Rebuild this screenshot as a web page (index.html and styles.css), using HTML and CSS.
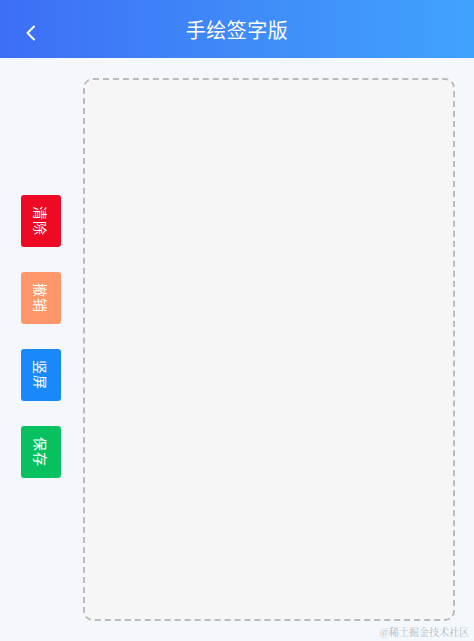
FILE: index.html
```html
<!doctype html>
<html>
	<head>
		<meta charset="utf-8">
		<link rel="stylesheet" href="styles.css">
	</head>
	<body>
		<div class="nav-bar">
			<span class="nav-back">
				<svg width="12" height="16" viewBox="0 0 12 16">
					<path d="M9 1.5 L2.5 8 L9 14.5" fill="none" stroke="#fff" stroke-width="2" stroke-linecap="round" stroke-linejoin="round"/>
				</svg>
			</span>
			<h1 class="nav-title">手绘签字版</h1>
		</div>

		<div class="sign-page">
			<div class="sign-actions">
				<button class="sign-btn sign-btn--danger"><span>清除</span></button>
				<button class="sign-btn sign-btn--warning"><span>撤销</span></button>
				<button class="sign-btn sign-btn--primary"><span>竖屏</span></button>
				<button class="sign-btn sign-btn--success"><span>保存</span></button>
			</div>
			<div class="sign-board"></div>
		</div>

		<div class="watermark">@稀土掘金技术社区</div>
	</body>
</html>
```

FILE: styles.css
```css
html, body {
	margin: 0;
	padding: 0;
	height: 100%;
}

body {
	display: flex;
	flex-direction: column;
	background: #f4f8fc;
	font-family: "Noto Sans CJK SC", "Noto Sans", sans-serif;
	position: relative;
}

.nav-bar {
	position: relative;
	display: flex;
	align-items: center;
	justify-content: center;
	height: 58px;
	flex-shrink: 0;
	background: linear-gradient(90deg, #3d6ef6 0%, #3f8af8 50%, #41a2fe 100%);
}
	.nav-back {
		position: absolute;
		left: 25px;
		top: 22px;
		width: 12px;
		height: 16px;
	}
	.nav-title {
		margin: 0;
		font-size: 20px;
		font-weight: 400;
		color: #fff;
		letter-spacing: 0.5px;
	}

.sign-page {
	flex: 1;
	display: flex;
	padding: 20px 19px 20px 0;
	min-height: 0;
}

.sign-actions {
	width: 82px;
	flex-shrink: 0;
	display: flex;
	flex-direction: column;
	align-items: center;
	justify-content: center;
	gap: 25px;
	padding-bottom: 26px;
	padding-right: 1px;
}

.sign-btn {
	width: 40px;
	height: 52px;
	border: none;
	border-radius: 3px;
	padding: 0;
	display: flex;
	align-items: center;
	justify-content: center;
	color: #fff;
	font-family: inherit;
	cursor: pointer;
}
	.sign-btn span {
		writing-mode: vertical-rl;
		text-orientation: sideways;
		font-size: 14px;
		line-height: 1;
		letter-spacing: 1px;
	}
.sign-btn--danger {
	background: #ee0a24;
}
.sign-btn--warning {
	background: #ff976a;
}
.sign-btn--primary {
	background: #1989fa;
}
.sign-btn--success {
	background: #07c160;
}

.sign-board {
	flex: 1;
	background: #f6f6f6;
	border: 2px dashed #bcbcbc;
	border-radius: 10px;
}

.watermark {
	position: absolute;
	right: 5px;
	bottom: 2px;
	font-family: "Noto Serif CJK SC", "Noto Sans CJK SC", serif;
	font-size: 10px;
	color: #b4b8bd;
}
```
